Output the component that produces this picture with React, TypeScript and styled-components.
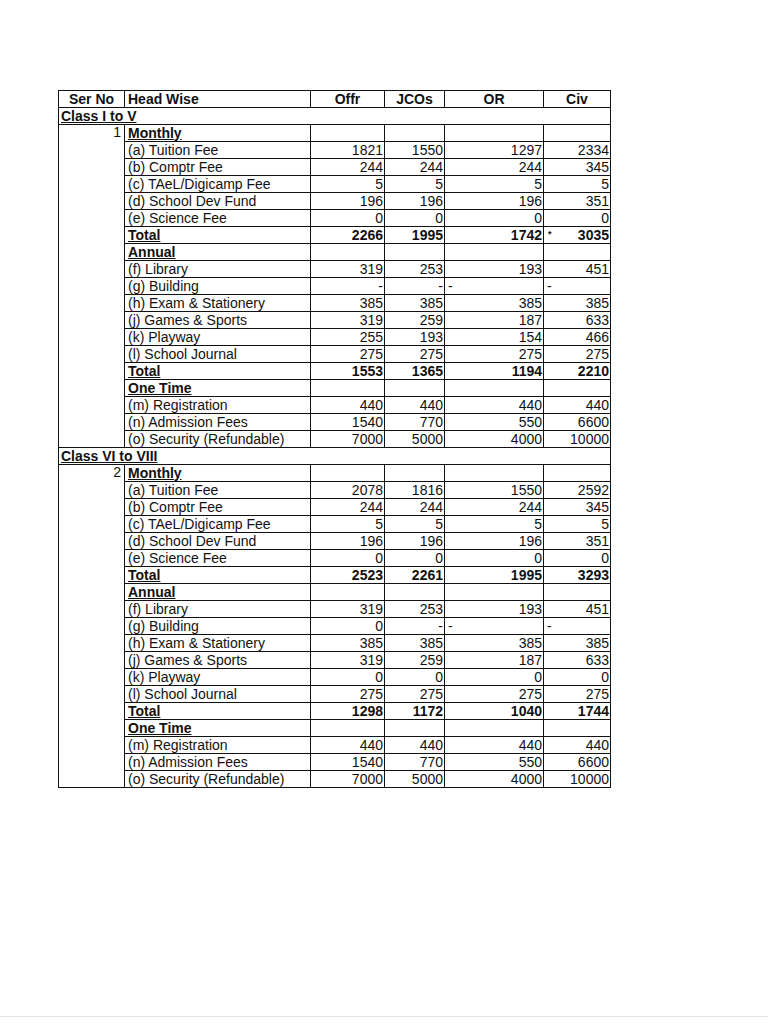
import React from 'react';
import styled, { createGlobalStyle } from 'styled-components';

const GlobalStyle = createGlobalStyle`
  html, body {
    margin: 0;
    padding: 0;
    background: #ffffff;
  }
  body {
    font-family: "Liberation Sans", Arial, sans-serif;
    color: #111;
  }
`;

const Page = styled.div`
  box-sizing: border-box;
  height: 1017px;
  padding: 90px 0 0 58px;
  border-bottom: 1px solid #e2e2e2;
`;

const Sheet = styled.table`
  border-collapse: collapse;
  table-layout: fixed;
  width: 552px;
  font-size: 14px;
  line-height: 15px;
  border: 1.5px solid #111;
`;

const Row = styled.tr`
  height: 17px;
`;

const HeadCell = styled.th<{ $left?: boolean }>`
  border: 1.5px solid #111;
  padding: 0 3px;
  font-weight: bold;
  text-align: ${(p) => (p.$left ? 'left' : 'center')};
  white-space: nowrap;
`;

const ClassCell = styled.td`
  border: 1.5px solid #111;
  padding: 0 2px;
  font-weight: bold;
  text-decoration: underline;
  text-underline-offset: 1px;
`;

const SerCell = styled.td`
  border: 1.5px solid #111;
  padding: 0 3px 0 0;
  text-align: right;
  vertical-align: top;
`;

const LabelCell = styled.td<{ $strong?: boolean }>`
  border: 1.5px solid #111;
  padding: 0 3px;
  white-space: nowrap;
  overflow: hidden;
  font-weight: ${(p) => (p.$strong ? 'bold' : 'normal')};
  text-decoration: ${(p) => (p.$strong ? 'underline' : 'none')};
  text-underline-offset: 1px;
`;

const Cell = styled.td<{ $bold?: boolean; $left?: boolean }>`
  border: 1.5px solid #111;
  padding: 0 1px 0 3px;
  white-space: nowrap;
  text-align: ${(p) => (p.$left ? 'left' : 'right')};
  font-weight: ${(p) => (p.$bold ? 'bold' : 'normal')};
`;

const Speck = styled.span`
  float: left;
  font-size: 9px;
  line-height: 12px;
  margin-left: 1px;
`;

type Val = string | { v: string; left?: boolean; mark?: boolean };
type Line = { label: string; kind: 'head' | 'item' | 'total'; vals?: Val[] };

const L = (v: string): Val => ({ v, left: true });

const build = (
  monthly: Val[][],
  mTotal: Val[],
  annual: Val[][],
  aTotal: Val[],
  once: Val[][]
): Line[] => [
  { label: 'Monthly', kind: 'head' },
  ...['(a) Tuition Fee', '(b) Comptr Fee', '(c) TAeL/Digicamp Fee', '(d) School Dev Fund', '(e) Science Fee'].map(
    (label, i) => ({ label, kind: 'item' as const, vals: monthly[i] })
  ),
  { label: 'Total', kind: 'total', vals: mTotal },
  { label: 'Annual', kind: 'head' },
  ...['(f) Library', '(g) Building', '(h) Exam & Stationery', '(j) Games & Sports', '(k) Playway', '(l) School Journal'].map(
    (label, i) => ({ label, kind: 'item' as const, vals: annual[i] })
  ),
  { label: 'Total', kind: 'total', vals: aTotal },
  { label: 'One Time', kind: 'head' },
  ...['(m) Registration', '(n) Admission Fees', '(o) Security (Refundable)'].map((label, i) => ({
    label,
    kind: 'item' as const,
    vals: once[i],
  })),
];

const sections = [
  {
    title: 'Class I to V',
    no: 1,
    lines: build(
      [
        ['1821', '1550', '1297', '2334'],
        ['244', '244', '244', '345'],
        ['5', '5', '5', '5'],
        ['196', '196', '196', '351'],
        ['0', '0', '0', '0'],
      ],
      ['2266', '1995', '1742', { v: '3035', mark: true }],
      [
        ['319', '253', '193', '451'],
        ['-', '-', L('-'), L('-')],
        ['385', '385', '385', '385'],
        ['319', '259', '187', '633'],
        ['255', '193', '154', '466'],
        ['275', '275', '275', '275'],
      ],
      ['1553', '1365', '1194', '2210'],
      [
        ['440', '440', '440', '440'],
        ['1540', '770', '550', '6600'],
        ['7000', '5000', '4000', '10000'],
      ]
    ),
  },
  {
    title: 'Class VI to VIII',
    no: 2,
    lines: build(
      [
        ['2078', '1816', '1550', '2592'],
        ['244', '244', '244', '345'],
        ['5', '5', '5', '5'],
        ['196', '196', '196', '351'],
        ['0', '0', '0', '0'],
      ],
      ['2523', '2261', '1995', '3293'],
      [
        ['319', '253', '193', '451'],
        ['0', '-', L('-'), L('-')],
        ['385', '385', '385', '385'],
        ['319', '259', '187', '633'],
        ['0', '0', '0', '0'],
        ['275', '275', '275', '275'],
      ],
      ['1298', '1172', '1040', '1744'],
      [
        ['440', '440', '440', '440'],
        ['1540', '770', '550', '6600'],
        ['7000', '5000', '4000', '10000'],
      ]
    ),
  },
];

const ValueCell = ({ val, bold }: { val?: Val; bold?: boolean }) => {
  if (val === undefined) return <Cell />;
  const item = typeof val === 'string' ? { v: val } : val;
  return (
    <Cell $bold={bold} $left={item.left}>
      {item.mark && <Speck>*</Speck>}
      {item.v}
    </Cell>
  );
};

export default function App() {
  return (
    <Page>
      <GlobalStyle />
      <Sheet>
        <colgroup>
          <col style={{ width: 66 }} />
          <col style={{ width: 186 }} />
          <col style={{ width: 74 }} />
          <col style={{ width: 60 }} />
          <col style={{ width: 99 }} />
          <col style={{ width: 67 }} />
        </colgroup>
        <thead>
          <Row>
            <HeadCell>Ser No</HeadCell>
            <HeadCell $left>Head Wise</HeadCell>
            <HeadCell>Offr</HeadCell>
            <HeadCell>JCOs</HeadCell>
            <HeadCell>OR</HeadCell>
            <HeadCell>Civ</HeadCell>
          </Row>
        </thead>
        <tbody>
          {sections.map((sec) => (
            <React.Fragment key={sec.no}>
              <Row>
                <ClassCell colSpan={6}>{sec.title}</ClassCell>
              </Row>
              {sec.lines.map((line, i) => (
                <Row key={i}>
                  {i === 0 && <SerCell rowSpan={sec.lines.length}>{sec.no}</SerCell>}
                  <LabelCell $strong={line.kind !== 'item'}>{line.label}</LabelCell>
                  {[0, 1, 2, 3].map((c) => (
                    <ValueCell key={c} val={line.vals?.[c]} bold={line.kind === 'total'} />
                  ))}
                </Row>
              ))}
            </React.Fragment>
          ))}
        </tbody>
      </Sheet>
    </Page>
  );
}
